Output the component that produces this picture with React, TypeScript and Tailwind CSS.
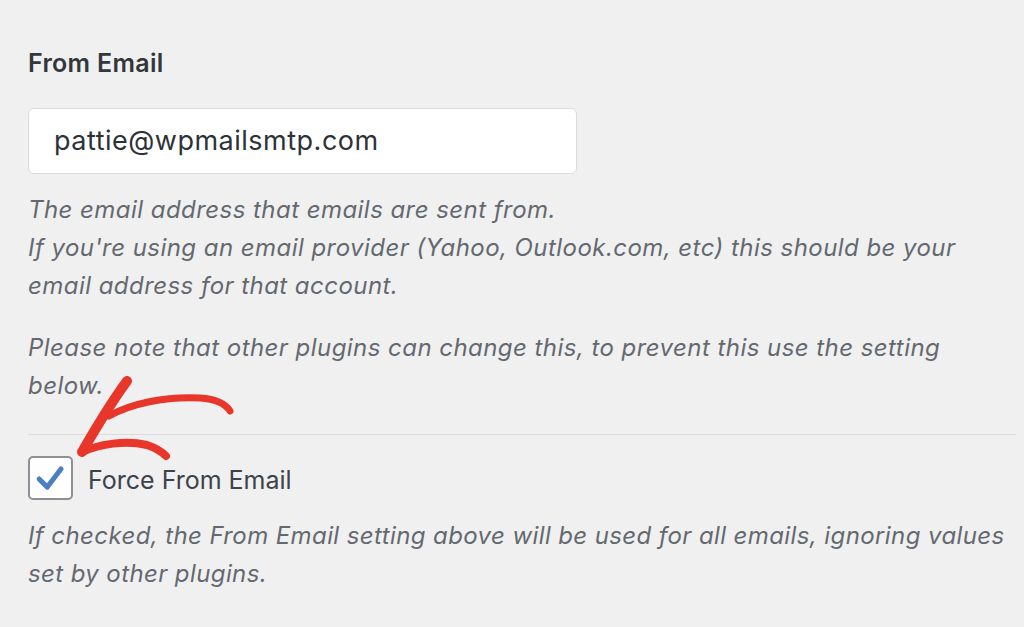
import React from "react";

const font = { fontFamily: "Inter, 'Liberation Sans', sans-serif" };

const Arrow: React.FC = () => (
  <svg className="absolute left-0 top-0 pointer-events-none" width="260" height="480" viewBox="0 0 260 480">
    <path d="M109 416 C 130 404, 165 396, 200 398 C 215 399, 225 403, 230 411" fill="none" stroke="#e8372a" strokeWidth="7" strokeLinecap="round" />
    <path d="M127 381 C 113 400, 97 426, 82 452" fill="none" stroke="#e8372a" strokeWidth="10" strokeLinecap="round" />
    <path d="M82 452 C 100 444, 125 440, 147 445 C 156 448, 162 452, 166 456" fill="none" stroke="#e8372a" strokeWidth="8" strokeLinecap="round" />
  </svg>
);

export default function App() {
  return (
    <div className="relative w-full h-[627px] bg-[#f0f0f1] overflow-hidden pl-[28px] pr-[8px] pt-[48px]" style={font}>
      <h2 className="text-[25px] leading-[30px] font-semibold tracking-[0.3px] text-[#32373c]">From Email</h2>

      <div className="mt-[30px] w-[549px] h-[66px] bg-white border border-[#dcdcde] rounded-[6px] flex items-center pl-[25px]">
        <span className="text-[27px] tracking-[0.5px] text-[#2c3338]">pattie@wpmailsmtp.com</span>
      </div>

      <div className="mt-[17px] italic text-[24px] tracking-[0.45px] leading-[38px] text-[#646970]">
        <p>
          <span className="block whitespace-nowrap">The email address that emails are sent from.</span>
          <span className="block whitespace-nowrap">If you're using an email provider (Yahoo, Outlook.com, etc) this should be your</span>
          <span className="block whitespace-nowrap">email address for that account.</span>
        </p>
        <p className="mt-[24px]">
          <span className="block whitespace-nowrap">Please note that other plugins can change this, to prevent this use the setting</span>
          <span className="block whitespace-nowrap">below.</span>
        </p>
      </div>

      <div className="mt-[29px] h-px bg-[#dcdcde]" />

      <label className="mt-[21px] flex items-center gap-[15px]">
        <span className="w-[45px] h-[44px] rounded-[5px] border-2 border-[#8c8f94] bg-white flex items-center justify-center">
          <svg width="45" height="44" viewBox="0 0 45 44">
            <path d="M10 23 L19 32 L34 12" fill="none" stroke="#4a7fc1" strokeWidth="5.5" strokeLinecap="round" strokeLinejoin="round" />
          </svg>
        </span>
        <span className="mt-[6px] text-[25px] text-[#3c434a]">Force From Email</span>
      </label>

      <p className="mt-[17px] italic text-[24px] tracking-[0.4px] leading-[38px] text-[#646970]">
        <span className="block whitespace-nowrap">If checked, the From Email setting above will be used for all emails, ignoring values</span>
        <span className="block whitespace-nowrap">set by other plugins.</span>
      </p>

      <Arrow />
    </div>
  );
}
